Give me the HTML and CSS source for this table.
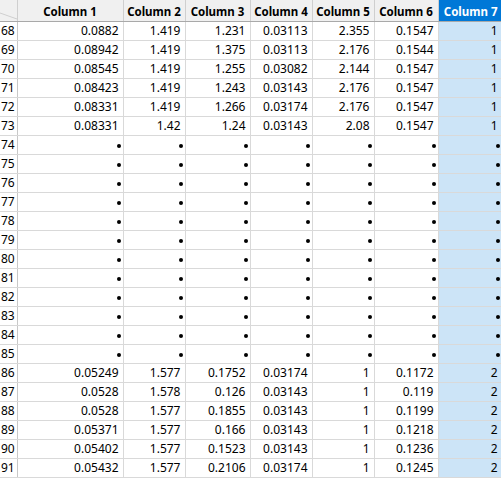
FILE: index.html
```html
<!DOCTYPE html>
<html>
<head>
<meta charset="utf-8">
<link rel="stylesheet" href="styles.css">
</head>
<body>
<table class="grid">
<colgroup>
<col class="c-rn"><col class="c1"><col class="c2"><col class="c3"><col class="c4"><col class="c5"><col class="c6"><col class="c7">
</colgroup>
<thead>
<tr>
<th class="corner"><svg class="diag" width="17" height="21" viewBox="0 0 17 21"><line x1="0" y1="13" x2="17" y2="19" stroke="#cfcfcf" stroke-width="1"/></svg></th>
<th>Column 1</th><th>Column 2</th><th>Column 3</th><th>Column 4</th><th>Column 5</th><th>Column 6</th><th class="sel">Column 7</th>
</tr>
</thead>
<tbody>
<tr><td class="rn">68</td><td>0.0882</td><td>1.419</td><td>1.231</td><td>0.03113</td><td>2.355</td><td>0.1547</td><td class="sel">1</td></tr>
<tr><td class="rn">69</td><td>0.08942</td><td>1.419</td><td>1.375</td><td>0.03113</td><td>2.176</td><td>0.1544</td><td class="sel">1</td></tr>
<tr><td class="rn">70</td><td>0.08545</td><td>1.419</td><td>1.255</td><td>0.03082</td><td>2.144</td><td>0.1547</td><td class="sel">1</td></tr>
<tr><td class="rn">71</td><td>0.08423</td><td>1.419</td><td>1.243</td><td>0.03143</td><td>2.176</td><td>0.1547</td><td class="sel">1</td></tr>
<tr><td class="rn">72</td><td>0.08331</td><td>1.419</td><td>1.266</td><td>0.03174</td><td>2.176</td><td>0.1547</td><td class="sel">1</td></tr>
<tr><td class="rn">73</td><td>0.08331</td><td>1.42</td><td>1.24</td><td>0.03143</td><td>2.08</td><td>0.1547</td><td class="sel">1</td></tr>
<tr class="miss"><td class="rn">74</td><td><span class="dot"></span></td><td><span class="dot"></span></td><td><span class="dot"></span></td><td><span class="dot"></span></td><td><span class="dot"></span></td><td><span class="dot"></span></td><td class="sel"><span class="dot"></span></td></tr>
<tr class="miss"><td class="rn">75</td><td><span class="dot"></span></td><td><span class="dot"></span></td><td><span class="dot"></span></td><td><span class="dot"></span></td><td><span class="dot"></span></td><td><span class="dot"></span></td><td class="sel"><span class="dot"></span></td></tr>
<tr class="miss"><td class="rn">76</td><td><span class="dot"></span></td><td><span class="dot"></span></td><td><span class="dot"></span></td><td><span class="dot"></span></td><td><span class="dot"></span></td><td><span class="dot"></span></td><td class="sel"><span class="dot"></span></td></tr>
<tr class="miss"><td class="rn">77</td><td><span class="dot"></span></td><td><span class="dot"></span></td><td><span class="dot"></span></td><td><span class="dot"></span></td><td><span class="dot"></span></td><td><span class="dot"></span></td><td class="sel"><span class="dot"></span></td></tr>
<tr class="miss"><td class="rn">78</td><td><span class="dot"></span></td><td><span class="dot"></span></td><td><span class="dot"></span></td><td><span class="dot"></span></td><td><span class="dot"></span></td><td><span class="dot"></span></td><td class="sel"><span class="dot"></span></td></tr>
<tr class="miss"><td class="rn">79</td><td><span class="dot"></span></td><td><span class="dot"></span></td><td><span class="dot"></span></td><td><span class="dot"></span></td><td><span class="dot"></span></td><td><span class="dot"></span></td><td class="sel"><span class="dot"></span></td></tr>
<tr class="miss"><td class="rn">80</td><td><span class="dot"></span></td><td><span class="dot"></span></td><td><span class="dot"></span></td><td><span class="dot"></span></td><td><span class="dot"></span></td><td><span class="dot"></span></td><td class="sel"><span class="dot"></span></td></tr>
<tr class="miss"><td class="rn">81</td><td><span class="dot"></span></td><td><span class="dot"></span></td><td><span class="dot"></span></td><td><span class="dot"></span></td><td><span class="dot"></span></td><td><span class="dot"></span></td><td class="sel"><span class="dot"></span></td></tr>
<tr class="miss"><td class="rn">82</td><td><span class="dot"></span></td><td><span class="dot"></span></td><td><span class="dot"></span></td><td><span class="dot"></span></td><td><span class="dot"></span></td><td><span class="dot"></span></td><td class="sel"><span class="dot"></span></td></tr>
<tr class="miss"><td class="rn">83</td><td><span class="dot"></span></td><td><span class="dot"></span></td><td><span class="dot"></span></td><td><span class="dot"></span></td><td><span class="dot"></span></td><td><span class="dot"></span></td><td class="sel"><span class="dot"></span></td></tr>
<tr class="miss"><td class="rn">84</td><td><span class="dot"></span></td><td><span class="dot"></span></td><td><span class="dot"></span></td><td><span class="dot"></span></td><td><span class="dot"></span></td><td><span class="dot"></span></td><td class="sel"><span class="dot"></span></td></tr>
<tr class="miss"><td class="rn">85</td><td><span class="dot"></span></td><td><span class="dot"></span></td><td><span class="dot"></span></td><td><span class="dot"></span></td><td><span class="dot"></span></td><td><span class="dot"></span></td><td class="sel"><span class="dot"></span></td></tr>
<tr><td class="rn">86</td><td>0.05249</td><td>1.577</td><td>0.1752</td><td>0.03174</td><td>1</td><td>0.1172</td><td class="sel">2</td></tr>
<tr><td class="rn">87</td><td>0.0528</td><td>1.578</td><td>0.126</td><td>0.03143</td><td>1</td><td>0.119</td><td class="sel">2</td></tr>
<tr><td class="rn">88</td><td>0.0528</td><td>1.577</td><td>0.1855</td><td>0.03143</td><td>1</td><td>0.1199</td><td class="sel">2</td></tr>
<tr><td class="rn">89</td><td>0.05371</td><td>1.577</td><td>0.166</td><td>0.03143</td><td>1</td><td>0.1218</td><td class="sel">2</td></tr>
<tr><td class="rn">90</td><td>0.05402</td><td>1.577</td><td>0.1523</td><td>0.03143</td><td>1</td><td>0.1236</td><td class="sel">2</td></tr>
<tr><td class="rn">91</td><td>0.05432</td><td>1.577</td><td>0.2106</td><td>0.03174</td><td>1</td><td>0.1245</td><td class="sel">2</td></tr>
</tbody>
</table>
</body>
</html>
```
FILE: styles.css
```css
html, body {
  margin: 0;
  padding: 0;
  background: #ffffff;
  overflow: hidden;
}
body {
  width: 501px;
  height: 478px;
  font-family: "Noto Sans", "DejaVu Sans", sans-serif;
  font-size: 12px;
  color: #000;
}
.grid {
  border-collapse: collapse;
  table-layout: fixed;
  width: 502px;
}
.c-rn { width: 17px; }
.c1 { width: 106px; }
.c2 { width: 62px; }
.c3 { width: 65px; }
.c4 { width: 62px; }
.c5 { width: 62px; }
.c6 { width: 64px; }
.c7 { width: 64px; }
th {
  height: 21px;
  padding: 0;
  background: #f0f0f0;
  border-right: 1px solid #cfcfcf;
  border-bottom: 1px solid #a9a9a9;
  font-weight: 700;
  font-size: 11.5px;
  text-align: center;
  vertical-align: bottom;
  line-height: 19px;
  white-space: nowrap;
  overflow: hidden;
}
th.corner {
  padding: 0;
  position: relative;
  background: #f0f0f0;
}
.diag {
  position: absolute;
  left: 0;
  top: 0;
}
th.sel {
  background: #0078d7;
  color: #ffffff;
  text-align: right;
  padding-right: 4px;
}
td {
  height: 18px;
  padding: 0 4px 0 0;
  border-right: 1px solid #d9d9d9;
  border-bottom: 1px solid #d9d9d9;
  text-align: right;
  line-height: 18px;
  white-space: nowrap;
  overflow: hidden;
}
td.rn {
  text-align: left;
  padding: 0 0 0 1px;
  border-right: 1px solid #c8c8c8;
  background: #ffffff;
}
td.sel {
  background: #cce4f7;
}
.miss td {
  padding-right: 2px;
}
.dot {
  display: inline-block;
  width: 4px;
  height: 4px;
  border-radius: 50%;
  background: #000;
  vertical-align: middle;
}
```
